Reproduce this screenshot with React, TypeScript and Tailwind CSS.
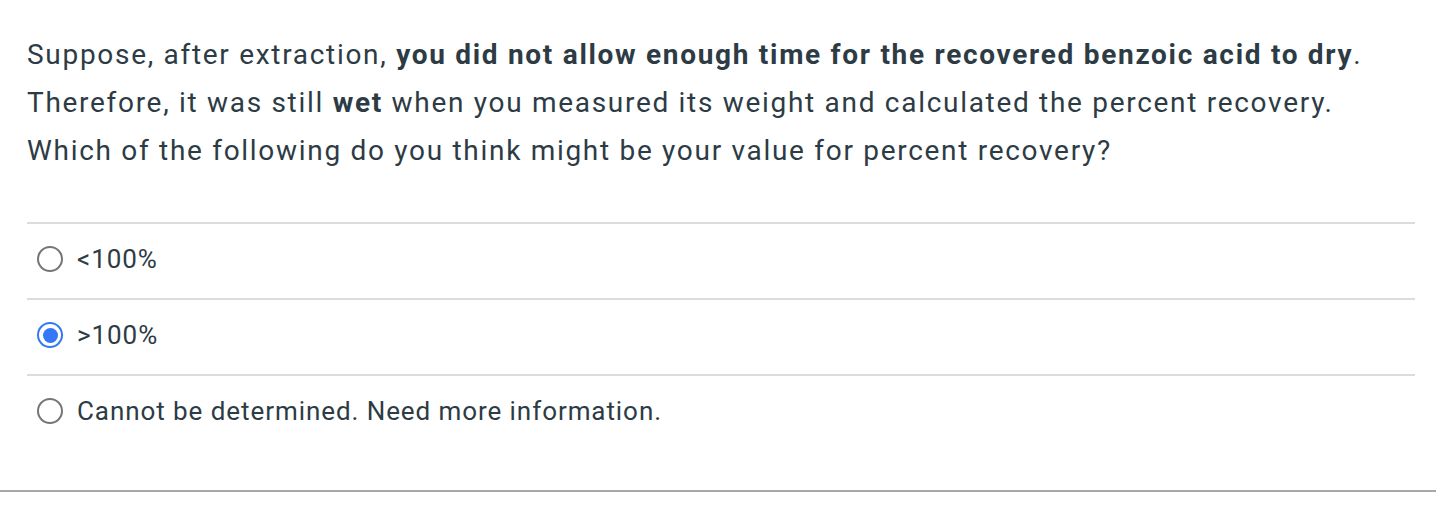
import React from "react";

function Radio({ checked }: { checked?: boolean }) {
  return checked ? (
    <span className="flex h-[26px] w-[26px] shrink-0 items-center justify-center rounded-full border-[2.5px] border-[#3478f6] bg-white">
      <span className="h-[15px] w-[15px] rounded-full bg-[#3478f6]" />
    </span>
  ) : (
    <span className="h-[26px] w-[26px] shrink-0 rounded-full border-2 border-[#767676] bg-white" />
  );
}

export default function App() {
  const options = [
    { label: "<100%", checked: false },
    { label: ">100%", checked: true },
    { label: "Cannot be determined. Need more information.", checked: false },
  ];
  return (
    <div className="h-[512px] w-full bg-white font-['Roboto',sans-serif] text-[#2d3b45]">
      <div className="h-[490px] pl-[27px] pr-[21px] pt-[31px]">
        <p className="text-[28px] leading-[48px] tracking-[1.7px]">
          Suppose, after extraction, <strong className="font-bold">you did not allow enough time for the recovered benzoic acid to dry</strong>.
          <br />
          Therefore, it was still <strong className="font-bold">wet</strong> when you measured its weight and calculated the percent recovery.
          <br />
          Which of the following do you think might be your value for percent recovery?
        </p>
        <div className="mt-[47px]">
          {options.map((o, i) => (
            <div key={i} className="flex h-[76px] items-center gap-[14px] border-t-2 border-[#dcdcdc] pb-[4px] pl-[10px]">
              <Radio checked={o.checked} />
              <span className="text-[26px] tracking-[0.93px]">{o.label}</span>
            </div>
          ))}
        </div>
      </div>
      <div className="h-[2px] w-full bg-[#a8a8a8]" />
    </div>
  );
}
